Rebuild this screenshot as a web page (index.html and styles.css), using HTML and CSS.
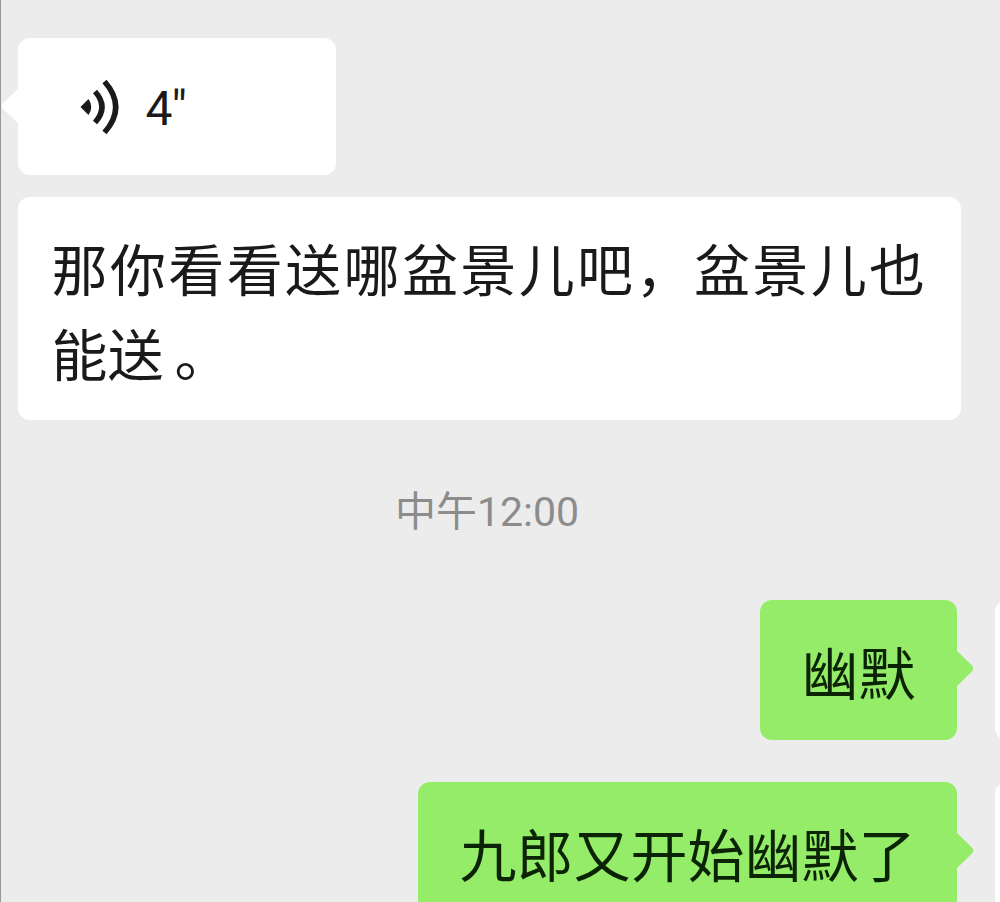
FILE: index.html
```html
<!DOCTYPE html>
<html lang="zh-CN">
<head>
    <meta charset="UTF-8">
    <meta name="viewport" content="width=device-width, initial-scale=1.0">
    <title>聊天</title>
    <link rel="stylesheet" href="styles.css">
</head>
<body>
    <div class="chat">
        <!-- Voice message -->
        <div class="row">
            <div class="bubble voice">
                <svg class="tail tail-left" viewBox="0 0 18 40" width="18" height="40">
                    <path d="M18 1 L2.5 15.5 Q-1 19 2.5 22.5 L18 37 Z" fill="#fff"/>
                </svg>
                <svg class="voice-icon" viewBox="0 0 40 56" width="40" height="56">
                    <path d="M0.5 28 L8.5 20 Q14 28 8.5 36 Z" fill="#1a1a1a"/>
                    <path d="M15 12.5 Q29 28 15 43.5" fill="none" stroke="#1a1a1a" stroke-width="5.5"/>
                    <path d="M24.5 2.5 Q47 28 24.5 53.5" fill="none" stroke="#1a1a1a" stroke-width="5.5"/>
                </svg>
                <span class="duration">4"</span>
            </div>
        </div>

        <!-- Text message -->
        <div class="row">
            <div class="bubble text">
                <p class="line wide">那你看看送哪盆景儿吧，盆景儿也</p>
                <p class="line">能送<span class="stop">。</span></p>
            </div>
        </div>

        <div class="time">中午12:00</div>

        <!-- Own messages -->
        <div class="row mine">
            <div class="bubble green">
                <p>幽默</p>
                <svg class="tail tail-right" viewBox="0 0 18 40" width="18" height="40">
                    <path d="M0 1 L15.5 16 Q19 19.5 15.5 23 L0 38 Z" fill="#95ec69"/>
                </svg>
            </div>
            <div class="avatar"></div>
        </div>
        <div class="row mine">
            <div class="bubble green">
                <p>九郎又开始幽默了</p>
                <svg class="tail tail-right" viewBox="0 0 18 40" width="18" height="40">
                    <path d="M0 1 L15.5 16 Q19 19.5 15.5 23 L0 38 Z" fill="#95ec69"/>
                </svg>
            </div>
            <div class="avatar"></div>
        </div>
    </div>
</body>
</html>
```

FILE: styles.css
```css
* {
    margin: 0;
    padding: 0;
    box-sizing: border-box;
}

body {
    background: #ececec;
    font-family: Roboto, "Noto Sans CJK SC", sans-serif;
    color: #1a1a1a;
    overflow: hidden;
}

.chat {
    height: 902px;
    padding-top: 38px;
    border-left: 1px solid #999;
    overflow: hidden;
}

.row {
    display: flex;
    padding-left: 16.5px;
    margin-bottom: 22px;
}

.bubble {
    position: relative;
    background: #fff;
    border-radius: 12px;
    font-size: 56px;
}

.tail {
    position: absolute;
}

.tail-left {
    left: -17px;
    top: 49px;
}

.tail-right {
    right: -17px;
    top: 49px;
}

.voice {
    display: flex;
    align-items: center;
    width: 318.5px;
    height: 137px;
    padding-left: 62px;
}

.duration {
    margin-left: 26px;
    padding-top: 4px;
    font-size: 48px;
    line-height: 56px;
    letter-spacing: -1px;
}

.text {
    width: 943.5px;
    height: 223px;
    padding: 33px 0 0 34px;
}

.line {
    line-height: 85px;
    white-space: nowrap;
}

.wide {
    letter-spacing: 2.4px;
}

.stop {
    margin-left: 11px;
}

.time {
    margin: 70px 27px 0 0;
    height: 110px;
    font-size: 41px;
    line-height: 44px;
    text-align: center;
    color: #8c8c8c;
}

.mine {
    justify-content: flex-end;
    gap: 38px;
    padding-left: 0;
    margin-bottom: 42px;
}

.green {
    height: 140px;
    padding: 0 41.5px;
    background: #95ec69;
    color: #0a2405;
    font-size: 57px;
    line-height: 151px;
    white-space: nowrap;
}

/* runs past the right edge of the screen */
.avatar {
    flex: none;
    width: 140px;
    height: 140px;
    margin-right: -135px;
    border-radius: 12px;
    background: #fff;
}
```
